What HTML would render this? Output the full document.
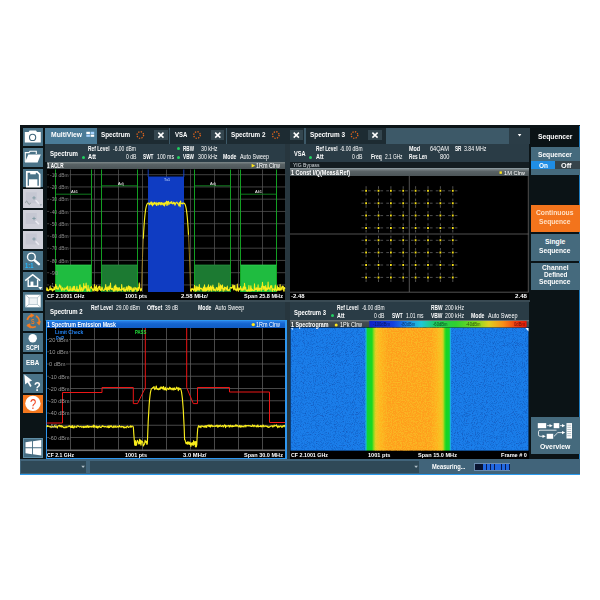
<!DOCTYPE html>
<html><head><meta charset="utf-8"><title>Spectrum Analyzer MultiView</title>
<style>
html,body{margin:0;padding:0;background:#fff;}
body{width:600px;height:600px;position:relative;overflow:hidden;font-family:"Liberation Sans",sans-serif;color:#fff;}
.a{position:absolute;}
.t{position:absolute;white-space:nowrap;line-height:1;color:#fff;transform-origin:0 0;}
.b{font-weight:bold;}
.tab{position:absolute;top:127.5px;height:16px;background:#1d2b32;}
.cls{position:absolute;top:129.7px;width:13.4px;height:10.8px;background:#34464f;}
.tb{position:absolute;left:23.3px;width:19.6px;height:18.6px;background:#4a7388;}
.tb.dis{background:#cfd0d9;}
.hdr{position:absolute;background:#2a3c46;}
.ttl{position:absolute;background:linear-gradient(#7e888a,#596265 35%,#4c5558);height:6.8px;}
.dot{position:absolute;width:3px;height:3px;border-radius:2px;background:#22d060;}
.sk{position:absolute;left:531.3px;width:48.7px;height:27px;background:#456a7d;}
</style></head><body>
<!-- frame -->
<div class="a" style="left:20px;top:125.2px;width:560px;height:349.300px;background:#0b1417;"></div>
<div class="a" style="left:20px;top:473.6px;width:560px;height:1px;background:#2b9bee;"></div>
<div class="a" style="left:579.2px;top:126px;width:0.9px;height:348px;background:#1f7cc0;"></div>

<!-- tab bar -->
<div class="a" style="left:45px;top:127.5px;width:485.3px;height:16px;background:#3d5968;"></div>
<div class="a" style="left:509.3px;top:127.5px;width:21px;height:16.700px;background:#2b3d47;"></div>
<div class="tab" style="left:45px;width:51.5px;background:#4a7b97;"></div>
<div class="tab" style="left:97px;width:71.8px;"></div><div class="cls" style="left:154.2px;"></div>
<div class="tab" style="left:170.3px;width:55.3px;"></div><div class="cls" style="left:211px;"></div>
<div class="tab" style="left:227px;width:77px;"></div><div class="cls" style="left:289.5px;"></div>
<div class="tab" style="left:305.5px;width:80px;"></div><div class="cls" style="left:368.3px;"></div>

<!-- left toolbar -->
<div class="tb" style="top:127.6px;"></div>
<div class="tb" style="top:148.2px;"></div>
<div class="tb" style="top:168.8px;"></div>
<div class="tb dis" style="top:189.4px;"></div>
<div class="tb dis" style="top:210px;"></div>
<div class="tb dis" style="top:230.5px;"></div>
<div class="tb" style="top:251px;"></div>
<div class="tb" style="top:271.5px;"></div>
<div class="tb" style="top:292px;"></div>
<div class="tb" style="top:312.6px;"></div>
<div class="tb" style="top:333.1px;"></div>
<div class="tb" style="top:353.7px;"></div>
<div class="tb" style="top:374.2px;"></div>
<div class="tb" style="top:394.8px;background:#f3781f;"></div>
<div class="tb" style="top:438.2px;height:19.400px;box-sizing:border-box;border:0.700px solid #5f8ea6;background:#466d82;"></div>

<!-- window headers -->
<div class="hdr" style="left:45px;top:144.2px;width:240.400px;height:17.8px;"></div>
<div class="hdr" style="left:289.6px;top:144.2px;width:239.6px;height:17.5px;"></div>
<div class="a" style="left:289px;top:161.7px;width:240px;height:6.3px;background:#141d21;"></div>
<div class="a" style="left:289px;top:167.8px;width:240px;height:0.9px;background:#8a979c;"></div>
<div class="hdr" style="left:45px;top:302px;width:240.400px;height:18.6px;"></div>
<div class="hdr" style="left:289.6px;top:302px;width:239.6px;height:17.8px;"></div>
<!-- dividers -->
<div class="a" style="left:285.400px;top:144.2px;width:4.400px;height:315px;background:#27363e;"></div>
<div class="a" style="left:45px;top:300px;width:484.5px;height:2px;background:#3a4b54;"></div>

<!-- title bars -->
<div class="ttl" style="left:46.5px;top:162px;width:238.900px;height:7.200px;"></div>
<div class="ttl" style="left:290px;top:169px;width:238.6px;height:6.6px;"></div>
<div class="a" style="left:45.7px;top:320px;width:241.400px;height:139.300px;background:#2e97f0;"></div>
<div class="a" style="left:47px;top:321.2px;width:238.200px;height:6.600px;background:linear-gradient(#2a7ee6,#1465cf 40%,#115cc4);"></div>
<div class="ttl" style="left:290px;top:320.4px;width:238.6px;height:7.200px;background:linear-gradient(#707a7e,#434c50 30%,#3a4347);"></div>

<!-- chart backgrounds -->
<div class="a" style="left:46.5px;top:169.200px;width:238.900px;height:130.800px;background:#000;"></div>
<div class="a" style="left:290px;top:175.7px;width:238.6px;height:124.2px;background:#000;"></div>
<div class="a" style="left:47px;top:327.900px;width:238.200px;height:130.100px;background:#000;"></div>
<div class="a" style="left:290px;top:327.4px;width:238.6px;height:131.4px;background:#000;"></div>

<!-- right softkey panel -->
<div class="a" style="left:530.3px;top:126px;width:49px;height:333px;background:#0b1316;"></div>
<div class="sk" style="top:147.4px;height:27.4px;"></div>
<div class="a" style="left:531.3px;top:160.8px;width:24px;height:8.6px;background:#1f8ee6;"></div>
<div class="a" style="left:555.3px;top:160.8px;width:24.7px;height:8.6px;background:#36444b;"></div>
<div class="sk" style="top:205.2px;background:#f3741c;"></div>
<div class="sk" style="top:234.3px;height:26.4px;"></div>
<div class="sk" style="top:263px;height:26.6px;"></div>
<div class="sk" style="top:417px;height:37.400px;"></div>

<!-- status bar -->
<div class="a" style="left:20px;top:459.2px;width:560px;height:14.5px;background:#41647a;"></div>
<div class="a" style="left:21.3px;top:460.5px;width:64.5px;height:12px;background:#2f4957;"></div>
<div class="a" style="left:89.7px;top:460.5px;width:329.5px;height:12px;background:#2f4957;"></div>
<div class="a" style="left:474.3px;top:463px;width:35.8px;height:7.5px;background:#0a1430;border:0.5px solid #6a8cb0;box-sizing:border-box;"></div>
<div class="a" style="left:482.5px;top:463.6px;width:27px;height:6.3px;background:repeating-linear-gradient(90deg,#2268e0 0,#2268e0 3px,#0a1a50 3px,#0a1a50 3.85px);"></div>

<!-- green status dots -->
<div class="dot" style="left:82px;top:155.6px;"></div>
<div class="dot" style="left:177px;top:147.2px;"></div><div class="dot" style="left:177px;top:155.6px;"></div>
<div class="dot" style="left:309.3px;top:155.6px;"></div>
<div class="dot" style="left:330.8px;top:314.3px;"></div>

<!-- charts + icons -->
<svg class="a" style="left:0;top:0" width="600" height="600" viewBox="0 0 600 600">
<defs>
<linearGradient id="sg" x1="0" x2="1" y1="0" y2="0">
<stop offset="0.0000" stop-color="#1b7eea"/><stop offset="0.3109" stop-color="#1b7eea"/><stop offset="0.3172" stop-color="#18b8d8"/><stop offset="0.3235" stop-color="#14d430"/><stop offset="0.3424" stop-color="#18d820"/><stop offset="0.3508" stop-color="#a0d820"/><stop offset="0.3592" stop-color="#e6cc20"/><stop offset="0.3761" stop-color="#ffb41e"/><stop offset="0.4097" stop-color="#ff9e1c"/><stop offset="0.5861" stop-color="#ff9e1c"/><stop offset="0.6155" stop-color="#ffb01e"/><stop offset="0.6324" stop-color="#f4c420"/><stop offset="0.6408" stop-color="#d8d020"/><stop offset="0.6471" stop-color="#60d820"/><stop offset="0.6534" stop-color="#14d624"/><stop offset="0.6672" stop-color="#14d430"/><stop offset="0.6714" stop-color="#18b8d8"/><stop offset="0.6769" stop-color="#1b7eea"/><stop offset="1.0000" stop-color="#1b7eea"/>
</linearGradient>
<linearGradient id="cb" x1="0" x2="1" y1="0" y2="0">
<stop offset="0" stop-color="#1020c8"/><stop offset="0.15" stop-color="#1440e0"/><stop offset="0.25" stop-color="#1c90e8"/><stop offset="0.33" stop-color="#20c8d8"/><stop offset="0.42" stop-color="#20cc60"/><stop offset="0.55" stop-color="#30d030"/><stop offset="0.68" stop-color="#80d820"/><stop offset="0.76" stop-color="#e0d020"/><stop offset="0.85" stop-color="#f89018"/><stop offset="0.93" stop-color="#f04010"/><stop offset="1" stop-color="#e01808"/>
</linearGradient>
<filter id="nz" x="0" y="0" width="1" height="1"><feTurbulence type="fractalNoise" baseFrequency="1.1" numOctaves="2" seed="3" result="n"/><feColorMatrix in="n" type="matrix" values="0 0 0 0 0  0 0 0 0 0  0 0 0 0 0  2.4 0 0 0 -1.1" result="m"/><feComposite in="SourceGraphic" in2="m" operator="in"/></filter>
<filter id="nz2" x="0" y="0" width="1" height="1"><feTurbulence type="fractalNoise" baseFrequency="0.8" numOctaves="2" seed="11" result="n"/><feColorMatrix in="n" type="matrix" values="0 0 0 0 0  0 0 0 0 0  0 0 0 0 0  0 3.4 0 0 -1.3" result="m"/><feComposite in="SourceGraphic" in2="m" operator="in"/></filter>
</defs>
<!-- tab glyphs -->
<rect x="86.3" y="131.8" width="3.6" height="2.2" fill="#fff"/><rect x="90.6" y="131.8" width="3.6" height="2.2" fill="#a8d4ff"/><rect x="86.3" y="134.6" width="3.6" height="2.2" fill="#a8d4ff"/><rect x="90.6" y="134.6" width="3.6" height="2.2" fill="#fff"/>
<circle cx="140.3" cy="135" r="3.300" fill="none" stroke="#e8661a" stroke-width="1.300" stroke-dasharray="1.300 1.300"/><circle cx="197" cy="135" r="3.300" fill="none" stroke="#e8661a" stroke-width="1.300" stroke-dasharray="1.300 1.300"/><circle cx="275.8" cy="135" r="3.300" fill="none" stroke="#e8661a" stroke-width="1.300" stroke-dasharray="1.300 1.300"/><circle cx="354.5" cy="135" r="3.300" fill="none" stroke="#e8661a" stroke-width="1.300" stroke-dasharray="1.300 1.300"/>
<path d="M158.3 132.6L163.5 137.6M163.5 132.6L158.3 137.6" stroke="#fff" stroke-width="1.500"/><path d="M215.2 132.6L220.4 137.6M220.4 132.6L215.2 137.6" stroke="#fff" stroke-width="1.500"/><path d="M293.7 132.6L298.9 137.6M298.9 132.6L293.7 137.6" stroke="#fff" stroke-width="1.500"/><path d="M372.4 132.6L377.6 137.6M377.6 132.6L372.4 137.6" stroke="#fff" stroke-width="1.500"/>
<path d="M517.8 134H521.400L519.600 136.400Z" fill="#fff"/>
<path d="M81.300 465.800H84.900L83.100 467.900Z M414.300 465.800H417.900L416.100 467.900Z" fill="#b4c2ca"/>
<path d="M251.600 163.800L255.200 165.700L251.600 167.600Z" fill="#ffe61a"/>
<rect x="499.500" y="171.400" width="2.400" height="2.400" fill="#ffe61a"/>
<circle cx="253.300" cy="324.600" r="1.700" fill="#ffe61a"/>
<circle cx="336.200" cy="325" r="1.500" fill="#ffe61a"/>

<!-- ACLR -->
<g stroke="#565656" stroke-width="0.750" fill="none"><path d="M70.5 169.5V292M94.5 169.5V292M118.5 169.5V292M142.5 169.5V292M166.5 169.5V292M190.5 169.5V292M214.5 169.5V292M238.5 169.5V292M262.5 169.5V292M47.2 174.70H49.2M69.5 174.70H285.4M47.2 186.95H49.2M69.5 186.95H285.4M47.2 199.20H49.2M69.5 199.20H285.4M47.2 211.45H49.2M69.5 211.45H285.4M47.2 223.70H49.2M69.5 223.70H285.4M47.2 235.95H49.2M69.5 235.95H285.4M47.2 248.20H49.2M69.5 248.20H285.4M47.2 260.45H49.2M69.5 260.45H285.4M47.2 272.70H49.2M59 272.70H285.4M47.2 284.95H49.2M55 284.95H285.4"/></g>
<rect x="55.500" y="265" width="36" height="27" fill="#1fbc40"/>
<rect x="101.500" y="265" width="36" height="27" fill="#1c7a32"/>
<rect x="194.500" y="265" width="36" height="27" fill="#1c7a32"/>
<rect x="240.500" y="265" width="36" height="27" fill="#1fbc40"/>
<rect x="148" y="176.500" width="36" height="115.500" fill="#0f3cc2"/>
<g stroke="#14b026" stroke-width="0.900" fill="none">
<path d="M55.500 169.500V292M91.500 169.500V292M101.500 169.500V292M137.500 169.500V292M194.500 169.500V292M230.500 169.500V292M240.500 169.500V292M276.500 169.500V292"/>
<path d="M55.500 194.200H91.500M101.500 185.800H137.500M194.500 185.800H230.500M240.500 194.200H276.500" stroke="#128a22"/>
<path d="M55.500 265H91.500M240.500 265H276.500" stroke="#34d856" stroke-width="0.700"/><path d="M101.500 265H137.500M194.500 265H230.500" stroke="#2a9a44" stroke-width="0.700"/>
</g>
<path d="M148.200 169.500V177M183.800 169.500V177" stroke="#1848d0" stroke-width="0.900"/>
<g fill="none" stroke-linejoin="round"><polyline points="141.7,288.1 142.1,268.9 142.5,257.4 142.9,247.4 143.3,238.7" stroke="#b89424" stroke-width="0.800"/><polyline points="188.5,234.9 188.9,242.9 189.3,252.2 189.7,262.9 190.1,275.2 190.5,291.2" stroke="#b89424" stroke-width="0.800"/>
<polyline points="46.5,290.6 46.9,287.6 47.3,290.7 47.7,288.7 48.1,290.3 48.5,290.8 48.9,290.0 49.3,290.0 49.7,289.0 50.1,286.2 50.5,289.6 50.9,289.9 51.3,289.9 51.7,288.2 52.1,289.5 52.5,291.0 52.9,289.3 53.3,290.3 53.7,289.9 54.1,286.9 54.5,288.5 54.9,289.9 55.3,287.7 55.7,284.2 56.1,286.6 56.5,288.8 56.9,286.5 57.3,288.9 57.7,288.5 58.1,289.4 58.5,288.5 58.9,287.1 59.3,286.4 59.7,284.8 60.1,286.3 60.5,288.2 60.9,286.0 61.3,289.7 61.7,290.6 62.1,290.5 62.5,287.7 62.9,288.1 63.3,289.2 63.7,290.1 64.1,290.4 64.5,290.0 64.9,287.8 65.3,289.1 65.7,289.0 66.1,288.8 66.5,287.7 66.9,286.9 67.3,290.3 67.7,286.1 68.1,290.3 68.5,290.3 68.9,290.9 69.3,289.8 69.7,290.6 70.1,286.4 70.5,290.2 70.9,290.3 71.3,290.4 71.7,290.3 72.1,287.9 72.5,290.7 72.9,290.7 73.3,286.4 73.7,289.9 74.1,288.7 74.5,286.2 74.9,290.6 75.3,290.2 75.7,290.1 76.1,290.9 76.5,289.0 76.9,286.2 77.3,290.8 77.7,291.2 78.1,289.4 78.5,290.7 78.9,291.2 79.3,289.0 79.7,285.2 80.1,284.8 80.5,290.8 80.9,291.1 81.3,289.6 81.7,287.3 82.1,288.4 82.5,291.0 82.9,290.3 83.3,290.4 83.7,283.5 84.1,289.0 84.5,287.2 84.9,286.2 85.3,287.1 85.7,288.0 86.1,283.0 86.5,287.5 86.9,290.8 87.3,291.0 87.7,291.0 88.1,285.3 88.5,290.3 88.9,290.5 89.3,289.7 89.7,291.1 90.1,287.9 90.5,287.4 90.9,287.1 91.3,286.4 91.7,288.5 92.1,288.1 92.5,289.3 92.9,291.2 93.3,289.0 93.7,290.8 94.1,288.0 94.5,284.5 94.9,289.7 95.3,290.5 95.7,286.9 96.1,290.9 96.5,285.6 96.9,288.2 97.3,291.2 97.7,288.4 98.1,290.7 98.5,286.9 98.9,287.0 99.3,286.1 99.7,289.6 100.1,286.6 100.5,290.5 100.9,290.1 101.3,290.4 101.7,287.9 102.1,287.1 102.5,288.8 102.9,290.5 103.3,290.5 103.7,290.0 104.1,290.4 104.5,289.8 104.9,288.0 105.3,289.4 105.7,284.6 106.1,289.1 106.5,290.1 106.9,287.6 107.3,291.1 107.7,289.9 108.1,286.3 108.5,289.5 108.9,287.9 109.3,290.2 109.7,285.8 110.1,288.6 110.5,283.0 110.9,288.7 111.3,289.5 111.7,288.5 112.1,289.1 112.5,288.3 112.9,289.6 113.3,290.8 113.7,291.2 114.1,287.6 114.5,286.0 114.9,291.1 115.3,290.2 115.7,284.9 116.1,288.5 116.5,290.0 116.9,287.3 117.3,291.1 117.7,289.3 118.1,287.8 118.5,290.5 118.9,290.6 119.3,287.5 119.7,289.7 120.1,290.3 120.5,289.4 120.9,289.8 121.3,290.9 121.7,284.5 122.1,289.6 122.5,289.1 122.9,289.1 123.3,288.3 123.7,290.8 124.1,287.5 124.5,291.1 124.9,290.7 125.3,289.5 125.7,291.3 126.1,287.5 126.5,289.5 126.9,286.6 127.3,290.8 127.7,290.7 128.1,288.4 128.5,285.9 128.9,286.4 129.3,291.2 129.7,286.6 130.1,288.5 130.5,289.6 130.9,286.9 131.3,287.9 131.7,290.0 132.1,291.1 132.5,291.3 132.9,288.1 133.3,287.9 133.7,291.3 134.1,290.3 134.5,290.1 134.9,287.2 135.3,289.1 135.7,289.3 136.1,287.9 136.5,288.8 136.9,291.2 137.3,288.8 137.7,290.8 138.1,287.4 138.5,290.5 138.9,288.3 139.3,282.9 139.7,287.6 140.1,288.4 140.5,291.0 140.9,289.3 141.3,290.7 141.7,288.1" stroke="#f8ec1c" stroke-width="1.050"/><polyline points="190.5,291.2 190.9,289.3 191.3,291.3 191.7,288.6 192.1,288.4 192.5,289.6 192.9,289.1 193.3,289.1 193.7,290.9 194.1,289.3 194.5,285.2 194.9,289.1 195.3,290.6 195.7,291.2 196.1,286.1 196.5,290.7 196.9,289.0 197.3,286.8 197.7,290.1 198.1,290.3 198.5,287.4 198.9,289.8 199.3,284.6 199.7,290.4 200.1,288.0 200.5,288.4 200.9,288.3 201.3,288.3 201.7,289.1 202.1,290.0 202.5,289.1 202.9,291.2 203.3,288.0 203.7,287.0 204.1,291.2 204.5,284.7 204.9,288.3 205.3,290.9 205.7,291.1 206.1,287.4 206.5,289.0 206.9,290.8 207.3,289.8 207.7,286.9 208.1,289.4 208.5,284.7 208.9,291.1 209.3,289.5 209.7,287.4 210.1,290.4 210.5,286.3 210.9,285.8 211.3,289.6 211.7,291.1 212.1,287.0 212.5,288.1 212.9,285.0 213.3,290.3 213.7,287.5 214.1,290.5 214.5,289.3 214.9,289.9 215.3,290.0 215.7,290.9 216.1,288.3 216.5,287.5 216.9,288.5 217.3,290.4 217.7,290.4 218.1,287.1 218.5,289.5 218.9,283.1 219.3,291.1 219.7,287.0 220.1,290.4 220.5,284.8 220.9,290.8 221.3,285.7 221.7,288.1 222.1,288.4 222.5,284.9 222.9,290.3 223.3,291.3 223.7,288.5 224.1,289.4 224.5,287.0 224.9,290.8 225.3,287.8 225.7,287.5 226.1,287.8 226.5,288.8 226.9,290.3 227.3,286.0 227.7,290.6 228.1,290.3 228.5,290.7 228.9,289.5 229.3,290.7 229.7,289.3 230.1,287.5 230.5,287.7 230.9,287.9 231.3,287.2 231.7,288.3 232.1,288.2 232.5,286.9 232.9,284.8 233.3,286.4 233.7,289.9 234.1,285.6 234.5,289.2 234.9,285.5 235.3,290.1 235.7,290.2 236.1,289.0 236.5,290.2 236.9,291.0 237.3,284.1 237.7,290.0 238.1,289.1 238.5,291.2 238.9,287.8 239.3,289.0 239.7,289.7 240.1,290.0 240.5,286.4 240.9,288.7 241.3,288.6 241.7,290.4 242.1,288.8 242.5,289.1 242.9,290.6 243.3,286.8 243.7,288.7 244.1,289.9 244.5,283.3 244.9,287.0 245.3,289.1 245.7,287.3 246.1,290.9 246.5,290.4 246.9,290.7 247.3,289.8 247.7,291.3 248.1,290.2 248.5,290.7 248.9,285.4 249.3,290.9 249.7,290.4 250.1,291.2 250.5,288.3 250.9,285.7 251.3,290.8 251.7,288.7 252.1,290.6 252.5,289.6 252.9,290.3 253.3,290.4 253.7,290.7 254.1,290.8 254.5,283.8 254.9,290.1 255.3,289.7 255.7,289.7 256.1,287.9 256.5,289.6 256.9,287.7 257.3,290.8 257.7,290.9 258.1,284.7 258.5,290.2 258.9,288.5 259.3,290.6 259.7,288.0 260.1,288.5 260.5,288.2 260.9,290.0 261.3,290.9 261.7,286.3 262.1,286.6 262.5,282.2 262.9,289.7 263.3,289.1 263.7,286.3 264.1,288.3 264.5,286.6 264.9,290.8 265.3,289.3 265.7,285.5 266.1,290.9 266.5,290.0 266.9,287.9 267.3,289.7 267.7,289.4 268.1,282.1 268.5,288.7 268.9,287.6 269.3,288.4 269.7,289.1 270.1,290.2 270.5,285.7 270.9,287.5 271.3,286.5 271.7,285.6 272.1,290.6 272.5,291.2 272.9,288.5 273.3,289.0 273.7,289.4 274.1,289.2 274.5,290.7 274.9,287.9 275.3,285.0 275.7,289.2 276.1,290.6 276.5,290.4 276.9,290.8 277.3,285.8 277.7,289.1 278.1,290.4 278.5,287.4 278.9,289.7 279.3,288.2 279.7,290.4 280.1,284.6 280.5,289.7 280.9,290.2 281.3,289.9 281.7,286.9 282.1,287.6 282.5,286.1 282.9,289.7 283.3,286.3 283.7,291.1 284.1,291.2 284.5,287.4 284.9,289.0" stroke="#f8ec1c" stroke-width="1.050"/><polyline points="143.3,238.7 143.7,231.3 144.1,225.0 144.5,219.8 144.9,215.5 145.3,212.0 145.7,209.2 146.1,207.1 146.5,205.6 146.9,204.5 147.3,203.7 147.7,203.3 148.1,203.1 148.5,203.0 148.9,203.0 149.3,204.8 149.7,203.9 150.1,203.1 150.5,203.9 150.9,202.0 151.3,204.7 151.7,202.1 152.1,203.6 152.5,205.8 152.9,203.0 153.3,203.3 153.7,204.7 154.1,203.3 154.5,202.3 154.9,203.6 155.3,204.0 155.7,204.2 156.1,202.4 156.5,205.4 156.9,205.3 157.3,203.3 157.7,203.6 158.1,202.8 158.5,205.0 158.9,202.5 159.3,204.1 159.7,202.7 160.1,202.5 160.5,204.2 160.9,204.9 161.3,203.3 161.7,202.5 162.1,204.3 162.5,203.2 162.9,203.7 163.3,205.1 163.7,204.7 164.1,202.7 164.5,206.0 164.9,203.3 165.3,204.2 165.7,202.5 166.1,203.2 166.5,201.2 166.9,205.4 167.3,204.9 167.7,201.8 168.1,201.5 168.5,201.4 168.9,204.7 169.3,202.7 169.7,203.2 170.1,202.9 170.5,203.2 170.9,202.0 171.3,203.3 171.7,201.6 172.1,203.2 172.5,203.7 172.9,203.9 173.3,203.0 173.7,202.2 174.1,203.5 174.5,202.7 174.9,205.2 175.3,204.2 175.7,203.2 176.1,202.7 176.5,202.5 176.9,202.2 177.3,202.9 177.7,203.7 178.1,203.9 178.5,204.0 178.9,205.8 179.3,202.5 179.7,203.3 180.1,206.7 180.5,201.1 180.9,202.7 181.3,203.5 181.7,203.5 182.1,203.8 182.5,203.0 182.9,203.7 183.3,203.0 183.7,203.0 184.1,203.2 184.5,203.5 184.9,204.1 185.3,205.0 185.7,206.3 186.1,208.1 186.5,210.5 186.9,213.6 187.3,217.5 187.7,222.3 188.1,228.0 188.5,234.9" stroke="#f8ec1c" stroke-width="1.150"/></g>
<!-- SEM -->
<g stroke="#606060" stroke-width="0.750" fill="none"><path d="M70.5 328V450.6M94.5 328V450.6M118.5 328V450.6M142.5 328V450.6M166.5 328V450.6M190.5 328V450.6M214.5 328V450.6M238.5 328V450.6M262.5 328V450.6M47.2 339.50H49.2M69 339.50H285.2M47.2 351.75H49.2M69 351.75H285.2M47.2 364.00H49.2M66 364.00H285.2M47.2 376.25H49.2M70 376.25H285.2M47.2 388.50H49.2M70 388.50H285.2M47.2 400.75H49.2M70 400.75H285.2M47.2 413.00H49.2M70 413.00H285.2M47.2 425.25H49.2M57.5 425.25H285.2M47.2 437.50H49.2M70 437.50H285.2M47.2 449.75H49.2M46.5 449.75H285.2"/></g>
<path d="M46.500 423H62.500V392.500H102V387.500H133.300V403.600H137.500L144.700 389H145.300V328" fill="none" stroke="#ec1616" stroke-width="1"/>
<path d="M186.700 328V387.500L193.300 403.600H197.500V387.500H229.500V392H269.500V422.500H285.200" fill="none" stroke="#ec1616" stroke-width="1"/>
<polyline points="46.5,426.8 47.0,426.3 47.4,425.6 47.9,426.6 48.3,426.2 48.8,426.1 49.2,426.5 49.7,426.9 50.1,426.0 50.6,426.6 51.0,427.6 51.5,427.1 51.9,426.6 52.4,426.8 52.8,426.6 53.3,426.7 53.7,427.1 54.2,426.6 54.6,425.3 55.1,426.7 55.5,426.2 56.0,427.1 56.4,426.3 56.9,426.8 57.3,428.0 57.8,426.1 58.2,426.0 58.7,425.9 59.1,425.3 59.6,425.6 60.0,426.9 60.5,426.3 60.9,425.6 61.4,425.8 61.8,427.1 62.3,426.2 62.7,426.5 63.2,426.9 63.6,427.5 64.1,427.9 64.5,427.3 65.0,426.8 65.4,426.8 65.9,427.8 66.3,427.6 66.8,426.5 67.2,427.0 67.7,426.9 68.1,426.7 68.6,426.4 69.0,425.9 69.5,426.4 69.9,425.8 70.4,427.4 70.8,427.0 71.3,426.0 71.7,427.5 72.2,427.2 72.6,425.6 73.1,427.8 73.5,427.2 74.0,427.9 74.4,426.0 74.9,427.0 75.3,427.0 75.8,426.8 76.2,426.8 76.7,427.3 77.1,425.8 77.6,426.0 78.0,425.9 78.5,426.4 78.9,426.3 79.4,426.9 79.8,426.9 80.3,426.7 80.7,426.3 81.2,426.4 81.6,427.3 82.1,427.2 82.5,426.8 83.0,426.5 83.4,427.6 83.9,426.3 84.3,427.1 84.8,427.4 85.2,426.5 85.7,427.2 86.1,426.0 86.6,427.3 87.0,426.8 87.5,425.7 87.9,427.1 88.4,426.2 88.8,427.5 89.3,426.3 89.7,426.6 90.2,426.9 90.6,426.5 91.1,426.9 91.5,426.4 92.0,427.1 92.4,426.7 92.9,426.8 93.3,425.0 93.8,427.4 94.2,426.7 94.7,425.6 95.1,426.8 95.6,427.0 96.0,427.3 96.5,426.1 96.9,427.6 97.4,426.6 97.8,428.1 98.3,426.6 98.7,427.1 99.2,426.5 99.6,426.0 100.1,427.4 100.5,427.2 101.0,427.6 101.4,427.2 101.9,426.4 102.3,425.7 102.8,426.3 103.2,426.3 103.7,426.2 104.1,427.0 104.6,426.9 105.0,426.5 105.5,426.8 105.9,426.6 106.4,426.8 106.8,427.2 107.3,427.3 107.7,426.3 108.2,425.8 108.6,427.6 109.1,426.8 109.5,427.4 110.0,425.7 110.4,426.5 110.9,426.7 111.3,425.8 111.8,426.4 112.2,427.1 112.7,427.3 113.1,427.7 113.6,426.2 114.0,425.9 114.5,427.0 114.9,427.3 115.4,426.8 115.8,425.9 116.3,427.2 116.7,427.2 117.2,427.0 117.6,426.4 118.1,426.9 118.5,427.2 119.0,426.4 119.4,425.6 119.9,426.9 120.3,427.0 120.8,426.7 121.2,427.2 121.7,426.3 122.1,426.7 122.6,426.5 123.0,427.0 123.5,427.7 123.9,426.5 124.4,427.9 124.8,427.6 125.3,427.2 125.7,427.1 126.2,427.8 126.6,426.6 127.1,426.6 127.5,426.1 128.0,427.0 128.4,427.5 128.9,427.0 129.3,427.0 129.8,426.6 130.2,426.8 130.7,425.8 131.1,427.3 131.6,426.5 132.0,426.0 132.5,426.2 132.9,426.2 133.4,427.7 133.8,434.0 134.3,440.3 134.7,445.0 135.2,445.4 135.6,440.6 136.1,445.2 136.5,445.1 137.0,442.1 137.4,440.3 137.9,441.8 138.3,442.0 138.8,444.0 139.2,442.6 139.7,439.2 140.1,443.8 140.6,440.2 141.0,445.1 141.5,440.9 141.9,441.9 142.4,441.6 142.8,442.2 143.3,445.9 143.7,445.0 144.2,444.5 144.6,443.9 145.1,440.2 145.5,442.3 146.0,442.2 146.4,441.3 146.9,444.3 147.3,444.0 147.8,431.9 148.2,421.6 148.7,412.9 149.1,405.8 149.5,400.1 150.0,395.8 150.4,392.6 150.9,390.4 151.3,389.1 151.8,388.5 152.2,388.4 152.7,387.7 153.1,387.8 153.6,387.5 154.0,386.5 154.5,388.9 154.9,389.6 155.4,388.6 155.8,387.5 156.3,386.0 156.7,388.6 157.2,389.5 157.6,388.7 158.1,389.2 158.5,389.7 159.0,389.4 159.4,388.0 159.9,389.3 160.3,389.1 160.8,387.0 161.2,388.0 161.7,387.1 162.1,388.3 162.6,388.9 163.0,387.4 163.5,386.5 163.9,389.6 164.4,388.7 164.8,389.7 165.3,387.2 165.7,389.4 166.2,390.3 166.6,390.2 167.1,388.2 167.5,388.6 168.0,388.3 168.4,389.3 168.9,389.3 169.3,388.5 169.8,387.2 170.2,389.1 170.7,388.0 171.1,389.0 171.6,388.6 172.0,389.9 172.5,389.4 172.9,388.0 173.4,388.7 173.8,390.0 174.3,387.9 174.7,388.8 175.2,389.5 175.6,389.5 176.1,388.9 176.5,387.2 177.0,387.3 177.4,388.6 177.9,388.7 178.3,390.7 178.8,387.6 179.2,389.4 179.7,389.1 180.1,388.5 180.6,388.9 181.0,389.9 181.5,391.8 181.9,394.6 182.4,398.6 182.8,403.8 183.3,410.4 183.7,418.5 184.2,428.3 184.6,439.8 185.1,440.0 185.5,441.7 186.0,443.6 186.4,442.3 186.9,443.0 187.3,444.2 187.8,441.7 188.2,444.2 188.7,442.0 189.1,442.2 189.6,444.4 190.0,442.2 190.5,443.9 190.9,446.5 191.4,443.4 191.8,443.0 192.3,444.8 192.7,442.6 193.2,445.5 193.6,440.7 194.1,444.5 194.5,442.3 195.0,441.7 195.4,446.8 195.9,441.6 196.3,446.8 196.8,444.6 197.2,435.8 197.7,428.6 198.1,427.1 198.6,425.6 199.0,426.9 199.5,427.1 199.9,426.1 200.4,426.1 200.8,427.7 201.3,426.3 201.7,425.9 202.2,425.8 202.6,426.5 203.1,426.4 203.5,426.3 204.0,427.2 204.4,426.0 204.9,426.5 205.3,427.1 205.8,425.6 206.2,426.8 206.7,427.3 207.1,425.4 207.6,425.5 208.0,425.6 208.5,425.1 208.9,426.5 209.4,425.1 209.8,426.5 210.3,427.1 210.7,425.2 211.2,426.0 211.6,425.0 212.1,426.7 212.5,425.8 213.0,426.0 213.4,426.2 213.9,426.5 214.3,426.0 214.8,426.2 215.2,425.9 215.7,426.3 216.1,425.5 216.6,426.2 217.0,425.0 217.5,425.9 217.9,427.3 218.4,426.2 218.8,425.4 219.3,426.4 219.7,425.6 220.2,425.2 220.6,425.8 221.1,426.6 221.5,426.4 222.0,426.1 222.4,425.6 222.9,425.6 223.3,427.0 223.8,426.3 224.2,425.6 224.7,424.9 225.1,425.4 225.6,427.7 226.0,425.5 226.5,426.2 226.9,426.3 227.4,426.1 227.8,426.0 228.3,425.4 228.7,425.6 229.2,427.2 229.6,425.7 230.1,426.7 230.5,425.2 231.0,426.0 231.4,426.4 231.9,426.8 232.3,425.5 232.8,426.6 233.2,426.4 233.7,425.8 234.1,426.5 234.6,425.7 235.0,425.7 235.5,426.2 235.9,424.6 236.4,426.1 236.8,425.6 237.3,425.3 237.7,425.9 238.2,426.7 238.6,426.0 239.1,427.0 239.5,425.5 240.0,425.4 240.4,427.1 240.9,426.4 241.3,426.8 241.8,425.7 242.2,426.7 242.7,426.4 243.1,426.6 243.6,426.2 244.0,426.9 244.5,425.8 244.9,425.6 245.4,425.3 245.8,426.9 246.3,425.8 246.7,425.6 247.2,425.6 247.6,425.9 248.1,425.4 248.5,426.0 249.0,425.8 249.4,425.9 249.9,425.6 250.3,426.2 250.8,425.9 251.2,426.3 251.7,426.3 252.1,426.4 252.6,424.9 253.0,425.9 253.5,425.7 253.9,426.7 254.4,425.3 254.8,425.8 255.3,426.0 255.7,426.0 256.2,426.8 256.6,425.9 257.1,426.8 257.5,425.3 258.0,425.1 258.4,426.9 258.9,426.5 259.3,426.5 259.8,426.3 260.2,426.5 260.7,425.5 261.1,426.8 261.6,425.9 262.0,426.8 262.5,426.3 262.9,425.0 263.4,425.4 263.8,426.9 264.3,426.1 264.7,426.0 265.2,426.3 265.6,425.9 266.1,425.9 266.5,426.3 267.0,426.3 267.4,427.1 267.9,426.2 268.3,427.3 268.8,427.3 269.2,427.2 269.7,426.8 270.1,426.3 270.6,426.3 271.0,426.1 271.5,425.8 271.9,426.2 272.4,425.8 272.8,427.2 273.3,426.5 273.7,425.9 274.2,425.1 274.6,426.2 275.1,426.0 275.5,425.5 276.0,425.5 276.4,424.8 276.9,426.5 277.3,426.2 277.8,427.7 278.2,426.2 278.7,426.1 279.1,427.1 279.6,426.3 280.0,426.3 280.5,426.0 280.9,425.8 281.4,427.1 281.8,426.8 282.3,427.2 282.7,426.0 283.2,426.2 283.6,425.7 284.1,426.8 284.5,425.4 285.0,426.5" fill="none" stroke="#f8ec1c" stroke-width="1.150" stroke-linejoin="round"/>
<line x1="47" y1="450.600" x2="285.200" y2="450.600" stroke="#8a8a8a" stroke-width="0.900"/>
<!-- Constellation -->
<path d="M409.300 176V292M290 234H528.600M290 292.200H528.600M528.300 176V292.200" stroke="#6c6c6c" stroke-width="0.750"/>
<path d="M361.5 190.8H364.2M368.0 190.8H370.7M366.1 186.2V188.9M366.1 192.8V195.4M361.5 203.2H364.2M368.0 203.2H370.7M366.1 198.6V201.3M366.1 205.1V207.8M361.5 215.6H364.2M368.0 215.6H370.7M366.1 211.0V213.7M366.1 217.5V220.2M361.5 227.9H364.2M368.0 227.9H370.7M366.1 223.3V226.0M366.1 229.8V232.5M361.5 240.3H364.2M368.0 240.3H370.7M366.1 235.7V238.4M366.1 242.2V244.9M361.5 252.6H364.2M368.0 252.6H370.7M366.1 248.0V250.7M366.1 254.5V257.2M361.5 265.0H364.2M368.0 265.0H370.7M366.1 260.4V263.1M366.1 266.9V269.6M361.5 277.4H364.2M368.0 277.4H370.7M366.1 272.8V275.5M366.1 279.3V282.0M373.9 190.8H376.6M380.4 190.8H383.1M378.5 186.2V188.9M378.5 192.8V195.4M373.9 203.2H376.6M380.4 203.2H383.1M378.5 198.6V201.3M378.5 205.1V207.8M373.9 215.6H376.6M380.4 215.6H383.1M378.5 211.0V213.7M378.5 217.5V220.2M373.9 227.9H376.6M380.4 227.9H383.1M378.5 223.3V226.0M378.5 229.8V232.5M373.9 240.3H376.6M380.4 240.3H383.1M378.5 235.7V238.4M378.5 242.2V244.9M373.9 252.6H376.6M380.4 252.6H383.1M378.5 248.0V250.7M378.5 254.5V257.2M373.9 265.0H376.6M380.4 265.0H383.1M378.5 260.4V263.1M378.5 266.9V269.6M373.9 277.4H376.6M380.4 277.4H383.1M378.5 272.8V275.5M378.5 279.3V282.0M386.3 190.8H389.0M392.8 190.8H395.5M390.9 186.2V188.9M390.9 192.8V195.4M386.3 203.2H389.0M392.8 203.2H395.5M390.9 198.6V201.3M390.9 205.1V207.8M386.3 215.6H389.0M392.8 215.6H395.5M390.9 211.0V213.7M390.9 217.5V220.2M386.3 227.9H389.0M392.8 227.9H395.5M390.9 223.3V226.0M390.9 229.8V232.5M386.3 240.3H389.0M392.8 240.3H395.5M390.9 235.7V238.4M390.9 242.2V244.9M386.3 252.6H389.0M392.8 252.6H395.5M390.9 248.0V250.7M390.9 254.5V257.2M386.3 265.0H389.0M392.8 265.0H395.5M390.9 260.4V263.1M390.9 266.9V269.6M386.3 277.4H389.0M392.8 277.4H395.5M390.9 272.8V275.5M390.9 279.3V282.0M398.6 190.8H401.3M405.1 190.8H407.8M403.2 186.2V188.9M403.2 192.8V195.4M398.6 203.2H401.3M405.1 203.2H407.8M403.2 198.6V201.3M403.2 205.1V207.8M398.6 215.6H401.3M405.1 215.6H407.8M403.2 211.0V213.7M403.2 217.5V220.2M398.6 227.9H401.3M405.1 227.9H407.8M403.2 223.3V226.0M403.2 229.8V232.5M398.6 240.3H401.3M405.1 240.3H407.8M403.2 235.7V238.4M403.2 242.2V244.9M398.6 252.6H401.3M405.1 252.6H407.8M403.2 248.0V250.7M403.2 254.5V257.2M398.6 265.0H401.3M405.1 265.0H407.8M403.2 260.4V263.1M403.2 266.9V269.6M398.6 277.4H401.3M405.1 277.4H407.8M403.2 272.8V275.5M403.2 279.3V282.0M411.0 190.8H413.7M417.5 190.8H420.2M415.6 186.2V188.9M415.6 192.8V195.4M411.0 203.2H413.7M417.5 203.2H420.2M415.6 198.6V201.3M415.6 205.1V207.8M411.0 215.6H413.7M417.5 215.6H420.2M415.6 211.0V213.7M415.6 217.5V220.2M411.0 227.9H413.7M417.5 227.9H420.2M415.6 223.3V226.0M415.6 229.8V232.5M411.0 240.3H413.7M417.5 240.3H420.2M415.6 235.7V238.4M415.6 242.2V244.9M411.0 252.6H413.7M417.5 252.6H420.2M415.6 248.0V250.7M415.6 254.5V257.2M411.0 265.0H413.7M417.5 265.0H420.2M415.6 260.4V263.1M415.6 266.9V269.6M411.0 277.4H413.7M417.5 277.4H420.2M415.6 272.8V275.5M415.6 279.3V282.0M423.4 190.8H426.1M429.9 190.8H432.6M428.0 186.2V188.9M428.0 192.8V195.4M423.4 203.2H426.1M429.9 203.2H432.6M428.0 198.6V201.3M428.0 205.1V207.8M423.4 215.6H426.1M429.9 215.6H432.6M428.0 211.0V213.7M428.0 217.5V220.2M423.4 227.9H426.1M429.9 227.9H432.6M428.0 223.3V226.0M428.0 229.8V232.5M423.4 240.3H426.1M429.9 240.3H432.6M428.0 235.7V238.4M428.0 242.2V244.9M423.4 252.6H426.1M429.9 252.6H432.6M428.0 248.0V250.7M428.0 254.5V257.2M423.4 265.0H426.1M429.9 265.0H432.6M428.0 260.4V263.1M428.0 266.9V269.6M423.4 277.4H426.1M429.9 277.4H432.6M428.0 272.8V275.5M428.0 279.3V282.0M435.8 190.8H438.5M442.3 190.8H445.0M440.4 186.2V188.9M440.4 192.8V195.4M435.8 203.2H438.5M442.3 203.2H445.0M440.4 198.6V201.3M440.4 205.1V207.8M435.8 215.6H438.5M442.3 215.6H445.0M440.4 211.0V213.7M440.4 217.5V220.2M435.8 227.9H438.5M442.3 227.9H445.0M440.4 223.3V226.0M440.4 229.8V232.5M435.8 240.3H438.5M442.3 240.3H445.0M440.4 235.7V238.4M440.4 242.2V244.9M435.8 252.6H438.5M442.3 252.6H445.0M440.4 248.0V250.7M440.4 254.5V257.2M435.8 265.0H438.5M442.3 265.0H445.0M440.4 260.4V263.1M440.4 266.9V269.6M435.8 277.4H438.5M442.3 277.4H445.0M440.4 272.8V275.5M440.4 279.3V282.0M448.2 190.8H450.9M454.7 190.8H457.4M452.8 186.2V188.9M452.8 192.8V195.4M448.2 203.2H450.9M454.7 203.2H457.4M452.8 198.6V201.3M452.8 205.1V207.8M448.2 215.6H450.9M454.7 215.6H457.4M452.8 211.0V213.7M452.8 217.5V220.2M448.2 227.9H450.9M454.7 227.9H457.4M452.8 223.3V226.0M452.8 229.8V232.5M448.2 240.3H450.9M454.7 240.3H457.4M452.8 235.7V238.4M452.8 242.2V244.9M448.2 252.6H450.9M454.7 252.6H457.4M452.8 248.0V250.7M452.8 254.5V257.2M448.2 265.0H450.9M454.7 265.0H457.4M452.8 260.4V263.1M452.8 266.9V269.6M448.2 277.4H450.9M454.7 277.4H457.4M452.8 272.8V275.5M452.8 279.3V282.0" stroke="#606060" stroke-width="0.85" fill="none"/><path d="M365.2 189.8h1.8v2h-1.8zM365.2 202.2h1.8v2h-1.8zM365.2 214.6h1.8v2h-1.8zM365.2 226.9h1.8v2h-1.8zM365.2 239.3h1.8v2h-1.8zM365.2 251.6h1.8v2h-1.8zM365.2 264.0h1.8v2h-1.8zM365.2 276.4h1.8v2h-1.8zM377.6 189.8h1.8v2h-1.8zM377.6 202.2h1.8v2h-1.8zM377.6 214.6h1.8v2h-1.8zM377.6 226.9h1.8v2h-1.8zM377.6 239.3h1.8v2h-1.8zM377.6 251.6h1.8v2h-1.8zM377.6 264.0h1.8v2h-1.8zM377.6 276.4h1.8v2h-1.8zM390.0 189.8h1.8v2h-1.8zM390.0 202.2h1.8v2h-1.8zM390.0 214.6h1.8v2h-1.8zM390.0 226.9h1.8v2h-1.8zM390.0 239.3h1.8v2h-1.8zM390.0 251.6h1.8v2h-1.8zM390.0 264.0h1.8v2h-1.8zM390.0 276.4h1.8v2h-1.8zM402.3 189.8h1.8v2h-1.8zM402.3 202.2h1.8v2h-1.8zM402.3 214.6h1.8v2h-1.8zM402.3 226.9h1.8v2h-1.8zM402.3 239.3h1.8v2h-1.8zM402.3 251.6h1.8v2h-1.8zM402.3 264.0h1.8v2h-1.8zM402.3 276.4h1.8v2h-1.8zM414.7 189.8h1.8v2h-1.8zM414.7 202.2h1.8v2h-1.8zM414.7 214.6h1.8v2h-1.8zM414.7 226.9h1.8v2h-1.8zM414.7 239.3h1.8v2h-1.8zM414.7 251.6h1.8v2h-1.8zM414.7 264.0h1.8v2h-1.8zM414.7 276.4h1.8v2h-1.8zM427.1 189.8h1.8v2h-1.8zM427.1 202.2h1.8v2h-1.8zM427.1 214.6h1.8v2h-1.8zM427.1 226.9h1.8v2h-1.8zM427.1 239.3h1.8v2h-1.8zM427.1 251.6h1.8v2h-1.8zM427.1 264.0h1.8v2h-1.8zM427.1 276.4h1.8v2h-1.8zM439.5 189.8h1.8v2h-1.8zM439.5 202.2h1.8v2h-1.8zM439.5 214.6h1.8v2h-1.8zM439.5 226.9h1.8v2h-1.8zM439.5 239.3h1.8v2h-1.8zM439.5 251.6h1.8v2h-1.8zM439.5 264.0h1.8v2h-1.8zM439.5 276.4h1.8v2h-1.8zM451.9 189.8h1.8v2h-1.8zM451.9 202.2h1.8v2h-1.8zM451.9 214.6h1.8v2h-1.8zM451.9 226.9h1.8v2h-1.8zM451.9 239.3h1.8v2h-1.8zM451.9 251.6h1.8v2h-1.8zM451.9 264.0h1.8v2h-1.8zM451.9 276.4h1.8v2h-1.8z" fill="#f6e018"/>
<!-- Spectrogram -->
<rect x="290.500" y="327.600" width="238" height="123" fill="url(#sg)"/>
<rect x="290.500" y="327.600" width="75" height="123" fill="#0c3c98" filter="url(#nz)" opacity="0.550"/>
<rect x="451" y="327.600" width="77.500" height="123" fill="#0c3c98" filter="url(#nz)" opacity="0.550"/>
<rect x="375" y="327.600" width="67" height="123" fill="#f6cc2c" filter="url(#nz2)" opacity="0.550"/>
<rect x="369.300" y="320.900" width="157.300" height="6.500" fill="url(#cb)"/>
<path d="M525.500 328H528.500V331.500Z" fill="#fff"/>
<path d="M290.600 328H293V330.200Z" fill="#fff" opacity="0.700"/>

<!-- toolbar icons -->
<g fill="none" stroke="#fff" stroke-width="1.300">
 <!-- camera -->
 <path d="M24.800 132H28.600L29.600 130.500H36L37 132H40.800V142.400H24.800Z" fill="#fff" stroke="none"/>
 <circle cx="32.600" cy="137.400" r="3.100" fill="#fff" stroke="#3f6479" stroke-width="1.100"/>
 <!-- folder -->
 <path d="M25.300 162V152.600H29L30 151.300H36.300V154" stroke-width="1.100"/>
 <path d="M24.900 162.600L28.300 154.600H40.800L37.600 162.600Z" fill="#fff" stroke="none"/>
 <!-- save -->
 <path d="M26.800 171.800H37.200L39.700 174.300V186.700H26.800Z" stroke-width="1.700"/>
 <rect x="30.200" y="171.600" width="5.600" height="2.700" fill="#fff" stroke="none"/>
 <rect x="29" y="179.300" width="8.400" height="7.400" fill="#fff" stroke="none"/>
 <!-- disabled -->
 <path d="M25.800 192.300h11v11h-11zM25.800 212.900h11v11h-11zM25.800 233.400h11v11h-11z" fill="#c5c7d2" stroke="none"/>
 <path d="M34 196.200v3.400M32.300 197.900h3.400M34 216.800v3.400M32.300 218.500h3.400M34 237.300v3.400M32.300 239h3.400" stroke="#7e9aa3" stroke-width="0.900"/>
 <path d="M35.600 200.300l3.400 3.400M35.600 220.900l3.400 3.400M35.600 241.400l3.400 3.400" stroke="#e9e9f0" stroke-width="1.500"/>
 <path d="M25.300 202.800q1.300-3.400 2.600 0t2.600 0" stroke="#8a9a98" stroke-width="0.900"/>
 <path d="M40 204.500h1.800l-0.900 1.200z" fill="#6b7f88" stroke="none"/>
 <!-- magnifier -->
 <circle cx="31.400" cy="257" r="3.900" stroke-width="1.400"/><path d="M34.700 260.400L38.900 264.100" stroke-width="2.500" stroke-linecap="round"/>
 <!-- home -->
 <path d="M25.200 280.600L32.700 274.700L40.200 280.600" stroke-width="1.500"/><path d="M28.200 279.500V286.300H37.600V279.500" stroke-width="1.400"/><rect x="30.500" y="281.600" width="2.900" height="4.700" fill="#fff" stroke="none"/><path d="M38.300 286.900H42.300L40.300 289.700Z" fill="#fff" stroke="none"/>
 <!-- fullscreen -->
 <rect x="25.300" y="294.700" width="15.400" height="12.600" fill="#fff" stroke="none"/><rect x="29" y="297.900" width="8.200" height="6.400" fill="#eef2f5" stroke="#86a0ae" stroke-width="0.500"/><path d="M25.300 294.700L29 297.900M40.700 294.700L37.200 297.900M25.300 307.300L29 304.300M40.700 307.300L37.200 304.300" stroke="#6d8c9c" stroke-width="0.500"/>
 <!-- sequencer recycle -->
 <g stroke="#f47b20" stroke-width="1.700">
  <path d="M27.300 320A6 6 0 0 1 31.500 315.400"/><path d="M36 316A6 6 0 0 1 38.900 323.300"/><path d="M35.800 326.600A6 6 0 0 1 27.800 324.300"/>
  <path d="M30.800 313.600L34.200 315.300L31.200 317.600Z M40.600 321.300L39.300 325.200L36.800 322.600Z M30.600 328.300L26.600 325.700L30 323.600Z" fill="#f47b20" stroke-width="0.400"/>
 </g>
 <!-- SCPI circle -->
 <circle cx="32.700" cy="338.300" r="4.200" fill="#fff" stroke="none"/>
 <!-- pointer -->
 <path d="M24.300 374.600L25.200 384.500L27.600 382.400L30.200 386.900L31.600 386.100L29.300 381.700L32.100 380.400Z" fill="#fff" stroke="none"/>
 <!-- help -->
 <circle cx="32.900" cy="403.400" r="7.700" fill="#fff" stroke="none"/>
 <!-- windows -->
 <path d="M25.500 442.300L32 441.300V447.300H25.500ZM32.900 441.200L41.300 440V447.300H32.900ZM25.500 448.200H32V454.200L25.500 453.200ZM32.900 448.200H41.300V455.500L32.900 454.300Z" fill="#fff" stroke="none"/>
</g>

<!-- overview icon -->
<g fill="#fff" stroke="#fff" stroke-width="0.800">
 <rect x="537.800" y="423.100" width="8.400" height="5.100" stroke="none"/><rect x="553.700" y="423.100" width="5.600" height="5.100" stroke="none"/>
 <rect x="566.500" y="423.100" width="5.500" height="15.400" stroke="none"/>
 <path d="M567.300 425.200h3.900M567.300 427.300h3.900M567.300 429.400h3.900M567.300 431.500h3.900M567.300 433.600h3.900M567.300 435.700h3.900" stroke="#8fa3ae" stroke-width="0.700"/>
 <rect x="546.700" y="433.800" width="6.500" height="5" stroke="none"/>
 <path d="M547 425.650H550M560 425.650H562.500M556.500 430.200H540Q538.500 430.200 538.500 431.700V434.800Q538.500 436.300 540 436.300H543M554 436.300L557.800 432.600H562.500" fill="none"/>
 <path d="M549.500 424L552.700 425.650L549.500 427.300ZM562 424L565.200 425.650L562 427.300ZM542.500 434.650L545.700 436.300L542.500 437.950ZM562 430.950L565.200 432.600L562 434.250Z" stroke="none"/>
</g>
</svg>

<!-- all labels -->
<span class="t b" style="left:51.30px;top:131.00px;font-size:7.2px;transform:scaleX(0.943);">MultiView</span>
<span class="t b" style="left:100.80px;top:131.00px;font-size:7.2px;transform:scaleX(0.879);">Spectrum</span>
<span class="t b" style="left:174.70px;top:131.00px;font-size:7.2px;transform:scaleX(0.831);">VSA</span>
<span class="t b" style="left:230.80px;top:131.00px;font-size:7.2px;transform:scaleX(0.880);">Spectrum 2</span>
<span class="t b" style="left:309.50px;top:131.00px;font-size:7.2px;transform:scaleX(0.893);">Spectrum 3</span>
<span class="t b" style="left:24.80px;top:263.00px;font-size:6.8px;color:#22b8ff;transform:scaleX(0.855);">1:1</span>
<span class="t b" style="left:31.30px;top:319.00px;font-size:6.4px;color:#f47b20;transform:scaleX(0.843);">S</span>
<span class="t b" style="left:26.30px;top:345.00px;font-size:6.5px;transform:scaleX(0.883);">SCPI</span>
<span class="t b" style="left:26.00px;top:359.00px;font-size:7.2px;transform:scaleX(0.868);">EBA</span>
<span class="t b" style="left:33.80px;top:381.00px;font-size:12.5px;transform:scaleX(0.877);">?</span>
<span class="t" style="left:29.70px;top:397.00px;font-size:14.5px;color:#f0401c;transform:scaleX(0.769);">?</span>
<span class="t b" style="left:50.00px;top:150.00px;font-size:7.0px;transform:scaleX(0.867);">Spectrum</span>
<span class="t b" style="left:88.00px;top:146.00px;font-size:6.3px;transform:scaleX(0.768);">Ref Level</span>
<span class="t" style="left:113.00px;top:146.00px;font-size:6.3px;transform:scaleX(0.791);">-6.00 dBm</span>
<span class="t b" style="left:88.00px;top:154.00px;font-size:6.3px;transform:scaleX(0.915);">Att</span>
<span class="t" style="left:125.50px;top:154.00px;font-size:6.3px;transform:scaleX(0.810);">0 dB</span>
<span class="t b" style="left:143.00px;top:154.00px;font-size:6.3px;transform:scaleX(0.750);">SWT</span>
<span class="t" style="left:157.00px;top:154.00px;font-size:6.3px;transform:scaleX(0.823);">100 ms</span>
<span class="t b" style="left:183.00px;top:146.00px;font-size:6.3px;transform:scaleX(0.731);">RBW</span>
<span class="t" style="left:200.50px;top:146.00px;font-size:6.3px;transform:scaleX(0.842);">30 kHz</span>
<span class="t b" style="left:183.00px;top:154.00px;font-size:6.3px;transform:scaleX(0.748);">VBW</span>
<span class="t" style="left:197.50px;top:154.00px;font-size:6.3px;transform:scaleX(0.844);">300 kHz</span>
<span class="t b" style="left:223.00px;top:154.00px;font-size:6.3px;transform:scaleX(0.821);">Mode</span>
<span class="t" style="left:240.00px;top:154.00px;font-size:6.3px;transform:scaleX(0.854);">Auto Sweep</span>
<span class="t b" style="left:47.00px;top:163.00px;font-size:6.3px;transform:scaleX(0.733);">1 ACLR</span>
<span class="t" style="left:256.20px;top:163.00px;font-size:6.3px;transform:scaleX(0.861);">1Rm Clrw</span>
<span class="t b" style="left:293.70px;top:150.00px;font-size:7.0px;transform:scaleX(0.799);">VSA</span>
<span class="t b" style="left:315.50px;top:146.00px;font-size:6.3px;transform:scaleX(0.768);">Ref Level</span>
<span class="t" style="left:340.00px;top:146.00px;font-size:6.3px;transform:scaleX(0.774);">-6.00 dBm</span>
<span class="t b" style="left:316.00px;top:154.00px;font-size:6.3px;transform:scaleX(0.858);">Att</span>
<span class="t" style="left:352.00px;top:154.00px;font-size:6.3px;transform:scaleX(0.810);">0 dB</span>
<span class="t b" style="left:371.30px;top:154.00px;font-size:6.3px;transform:scaleX(0.784);">Freq</span>
<span class="t" style="left:384.50px;top:154.00px;font-size:6.3px;transform:scaleX(0.757);">2.1 GHz</span>
<span class="t b" style="left:408.80px;top:146.00px;font-size:6.3px;transform:scaleX(0.865);">Mod</span>
<span class="t" style="left:430.00px;top:146.00px;font-size:6.3px;transform:scaleX(0.890);">64QAM</span>
<span class="t b" style="left:455.00px;top:146.00px;font-size:6.3px;transform:scaleX(0.743);">SR</span>
<span class="t" style="left:464.00px;top:146.00px;font-size:6.3px;transform:scaleX(0.827);">3.84 MHz</span>
<span class="t b" style="left:408.80px;top:154.00px;font-size:6.3px;transform:scaleX(0.743);">Res Len</span>
<span class="t" style="left:439.50px;top:154.00px;font-size:6.3px;transform:scaleX(0.904);">800</span>
<span class="t" style="left:292.70px;top:162.00px;font-size:6.0px;color:#d8dde0;transform:scaleX(0.840);">YIG Bypass</span>
<span class="t b" style="left:290.60px;top:170.00px;font-size:6.3px;transform:scaleX(0.872);">1 Const I/Q(Meas&amp;Ref)</span>
<span class="t" style="left:504.00px;top:170.00px;font-size:6.2px;transform:scaleX(0.924);">1M Clrw</span>
<span class="t b" style="left:291.00px;top:293.00px;font-size:6.2px;transform:scaleX(0.955);">-2.48</span>
<span class="t b" style="left:514.50px;top:293.00px;font-size:6.2px;transform:scaleX(0.994);">2.48</span>
<span class="t" style="left:50.00px;top:173.00px;font-size:5.8px;color:#8c8c8c;transform:scaleX(0.844);">-10 dBm</span>
<span class="t" style="left:50.00px;top:185.00px;font-size:5.8px;color:#8c8c8c;transform:scaleX(0.844);">-20 dBm</span>
<span class="t" style="left:50.00px;top:197.00px;font-size:5.8px;color:#8c8c8c;transform:scaleX(0.844);">-30 dBm</span>
<span class="t" style="left:50.00px;top:210.00px;font-size:5.8px;color:#8c8c8c;transform:scaleX(0.844);">-40 dBm</span>
<span class="t" style="left:50.00px;top:222.00px;font-size:5.8px;color:#8c8c8c;transform:scaleX(0.844);">-50 dBm</span>
<span class="t" style="left:50.00px;top:234.00px;font-size:5.8px;color:#8c8c8c;transform:scaleX(0.844);">-60 dBm</span>
<span class="t" style="left:50.00px;top:246.00px;font-size:5.8px;color:#8c8c8c;transform:scaleX(0.844);">-70 dBm</span>
<span class="t" style="left:50.00px;top:259.00px;font-size:5.8px;color:#8c8c8c;transform:scaleX(0.844);">-80 dBm</span>
<span class="t" style="left:50.00px;top:271.00px;font-size:5.8px;color:#8c8c8c;transform:scaleX(0.954);">-90</span>
<span class="t" style="left:50.00px;top:283.00px;font-size:5.8px;color:#8c8c8c;transform:scaleX(0.776);">-1</span>
<span class="t" style="left:70.50px;top:190.00px;font-size:4px;transform:scaleX(1.016);">Alt1</span>
<span class="t" style="left:117.50px;top:182.00px;font-size:4px;transform:scaleX(0.951);">Adj</span>
<span class="t" style="left:163.50px;top:178.00px;font-size:4px;color:#cfe0ff;transform:scaleX(0.900);">Tx1</span>
<span class="t" style="left:209.50px;top:182.00px;font-size:4px;transform:scaleX(0.951);">Adj</span>
<span class="t" style="left:255.00px;top:190.00px;font-size:4px;transform:scaleX(1.016);">Alt1</span>
<span class="t b" style="left:47.00px;top:293.00px;font-size:6.2px;transform:scaleX(0.871);">CF 2.1001 GHz</span>
<span class="t b" style="left:125.00px;top:293.00px;font-size:6.2px;transform:scaleX(0.887);">1001 pts</span>
<span class="t b" style="left:180.50px;top:293.00px;font-size:6.2px;transform:scaleX(0.956);">2.58 MHz/</span>
<span class="t b" style="left:244.00px;top:293.00px;font-size:6.2px;transform:scaleX(0.898);">Span 25.8 MHz</span>
<span class="t b" style="left:50.00px;top:308.00px;font-size:7.0px;transform:scaleX(0.858);">Spectrum 2</span>
<span class="t b" style="left:91.00px;top:305.00px;font-size:6.3px;transform:scaleX(0.785);">Ref Level</span>
<span class="t" style="left:116.00px;top:305.00px;font-size:6.3px;transform:scaleX(0.788);">29.00 dBm</span>
<span class="t b" style="left:147.30px;top:305.00px;font-size:6.3px;transform:scaleX(0.835);">Offset</span>
<span class="t" style="left:165.00px;top:305.00px;font-size:6.3px;transform:scaleX(0.790);">39 dB</span>
<span class="t b" style="left:198.00px;top:305.00px;font-size:6.3px;transform:scaleX(0.821);">Mode</span>
<span class="t" style="left:214.50px;top:305.00px;font-size:6.3px;transform:scaleX(0.862);">Auto Sweep</span>
<span class="t b" style="left:47.00px;top:322.00px;font-size:6.3px;transform:scaleX(0.846);">1 Spectrum Emission Mask</span>
<span class="t" style="left:256.20px;top:322.00px;font-size:6.3px;transform:scaleX(0.861);">1Rm Clrw</span>
<span class="t b" style="left:55.30px;top:329.00px;font-size:6.0px;color:#2384f4;transform:scaleX(0.832);">Limit Check</span>
<span class="t b" style="left:135.00px;top:329.00px;font-size:6.0px;color:#22e83c;transform:scaleX(0.711);">PASS</span>
<span class="t b" style="left:56.00px;top:336.00px;font-size:5.6px;color:#2384f4;transform:scaleX(0.745);">P&lt;P</span>
<span class="t" style="left:48.50px;top:338.00px;font-size:5.8px;color:#9a9a9a;transform:scaleX(0.976);">20 dBm</span>
<span class="t" style="left:48.50px;top:350.00px;font-size:5.8px;color:#9a9a9a;transform:scaleX(0.976);">10 dBm</span>
<span class="t" style="left:48.50px;top:362.00px;font-size:5.8px;color:#9a9a9a;transform:scaleX(0.984);">0 dBm</span>
<span class="t" style="left:48.50px;top:375.00px;font-size:5.8px;color:#9a9a9a;transform:scaleX(0.935);">-10 dBm</span>
<span class="t" style="left:48.50px;top:387.00px;font-size:5.8px;color:#9a9a9a;transform:scaleX(0.935);">-20 dBm</span>
<span class="t" style="left:48.50px;top:399.00px;font-size:5.8px;color:#9a9a9a;transform:scaleX(0.935);">-30 dBm</span>
<span class="t" style="left:48.50px;top:411.00px;font-size:5.8px;color:#9a9a9a;transform:scaleX(0.935);">-40 dBm</span>
<span class="t" style="left:48.50px;top:424.00px;font-size:5.8px;color:#9a9a9a;transform:scaleX(0.954);">-50</span>
<span class="t" style="left:48.50px;top:436.00px;font-size:5.8px;color:#9a9a9a;transform:scaleX(0.935);">-60 dBm</span>
<span class="t b" style="left:47.00px;top:452.00px;font-size:6.2px;transform:scaleX(0.825);">CF 2.1 GHz</span>
<span class="t b" style="left:125.00px;top:452.00px;font-size:6.2px;transform:scaleX(0.887);">1001 pts</span>
<span class="t b" style="left:183.00px;top:452.00px;font-size:6.2px;transform:scaleX(0.947);">3.0 MHz/</span>
<span class="t b" style="left:244.00px;top:452.00px;font-size:6.2px;transform:scaleX(0.898);">Span 30.0 MHz</span>
<span class="t b" style="left:294.00px;top:309.00px;font-size:7.0px;transform:scaleX(0.839);">Spectrum 3</span>
<span class="t b" style="left:337.00px;top:305.00px;font-size:6.3px;transform:scaleX(0.768);">Ref Level</span>
<span class="t" style="left:361.50px;top:305.00px;font-size:6.3px;transform:scaleX(0.774);">-6.00 dBm</span>
<span class="t b" style="left:337.00px;top:313.00px;font-size:6.3px;transform:scaleX(0.858);">Att</span>
<span class="t" style="left:374.00px;top:313.00px;font-size:6.3px;transform:scaleX(0.810);">0 dB</span>
<span class="t b" style="left:391.80px;top:313.00px;font-size:6.3px;transform:scaleX(0.764);">SWT</span>
<span class="t" style="left:405.50px;top:313.00px;font-size:6.3px;transform:scaleX(0.781);">1.01 ms</span>
<span class="t b" style="left:430.50px;top:305.00px;font-size:6.3px;transform:scaleX(0.764);">RBW</span>
<span class="t" style="left:445.00px;top:305.00px;font-size:6.3px;transform:scaleX(0.822);">200 kHz</span>
<span class="t b" style="left:430.50px;top:313.00px;font-size:6.3px;transform:scaleX(0.782);">VBW</span>
<span class="t" style="left:445.00px;top:313.00px;font-size:6.3px;transform:scaleX(0.822);">200 kHz</span>
<span class="t b" style="left:471.00px;top:313.00px;font-size:6.3px;transform:scaleX(0.821);">Mode</span>
<span class="t" style="left:487.50px;top:313.00px;font-size:6.3px;transform:scaleX(0.868);">Auto Sweep</span>
<span class="t b" style="left:290.50px;top:322.00px;font-size:6.3px;transform:scaleX(0.850);">1 Spectrogram</span>
<span class="t" style="left:339.50px;top:322.00px;font-size:6.3px;transform:scaleX(0.873);">1Pk Clrw</span>
<span class="t" style="left:373.00px;top:322.00px;font-size:5.2px;color:#08145c;transform:scaleX(0.806);">-100dBm</span>
<span class="t" style="left:401.00px;top:322.00px;font-size:5.2px;color:#0a3468;transform:scaleX(0.769);">-80dBm</span>
<span class="t" style="left:432.60px;top:322.00px;font-size:5.2px;color:#0a4a1c;transform:scaleX(0.791);">-60dBm</span>
<span class="t" style="left:465.60px;top:322.00px;font-size:5.2px;color:#2a5008;transform:scaleX(0.791);">-40dBm</span>
<span class="t" style="left:514.00px;top:322.00px;font-size:5.2px;color:#6a0c06;transform:scaleX(0.810);">0dBm</span>
<span class="t b" style="left:291.00px;top:452.00px;font-size:6.2px;transform:scaleX(0.859);">CF 2.1001 GHz</span>
<span class="t b" style="left:367.50px;top:452.00px;font-size:6.2px;transform:scaleX(0.907);">1001 pts</span>
<span class="t b" style="left:418.00px;top:452.00px;font-size:6.2px;transform:scaleX(0.898);">Span 15.0 MHz</span>
<span class="t b" style="left:501.00px;top:452.00px;font-size:6.2px;transform:scaleX(0.898);">Frame # 0</span>
<span class="t b" style="left:537.50px;top:133.00px;font-size:7.6px;transform:scaleX(0.888);">Sequencer</span>
<span class="t b" style="left:538.00px;top:151.00px;font-size:7.2px;transform:scaleX(0.923);">Sequencer</span>
<span class="t b" style="left:538.50px;top:163.00px;font-size:6.8px;transform:scaleX(0.953);">On</span>
<span class="t b" style="left:561.00px;top:163.00px;font-size:6.8px;transform:scaleX(1.069);">Off</span>
<span class="t b" style="left:536.00px;top:210.00px;font-size:6.8px;color:#ffe0c4;transform:scaleX(0.993);">Continuous</span>
<span class="t b" style="left:539.00px;top:219.00px;font-size:6.8px;color:#ffe0c4;transform:scaleX(0.981);">Sequence</span>
<span class="t b" style="left:545.00px;top:239.00px;font-size:6.8px;">Single</span>
<span class="t b" style="left:539.00px;top:248.00px;font-size:6.8px;transform:scaleX(0.981);">Sequence</span>
<span class="t b" style="left:542.00px;top:265.00px;font-size:6.8px;transform:scaleX(0.988);">Channel</span>
<span class="t b" style="left:543.50px;top:272.00px;font-size:6.8px;transform:scaleX(0.942);">Defined</span>
<span class="t b" style="left:539.00px;top:279.00px;font-size:6.8px;transform:scaleX(0.981);">Sequence</span>
<span class="t b" style="left:540.10px;top:443.00px;font-size:7.4px;transform:scaleX(0.924);">Overview</span>
<span class="t b" style="left:432.00px;top:464.00px;font-size:6.4px;transform:scaleX(0.897);">Measuring...</span>

</body></html>
